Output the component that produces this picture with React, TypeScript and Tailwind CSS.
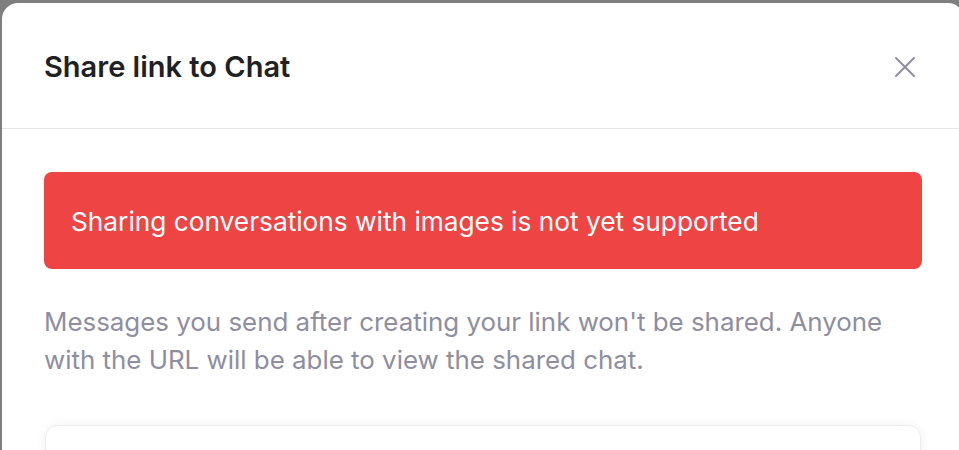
import React from "react";

export default function App() {
  return (
    <div
      className="w-[959px] h-[450px] overflow-hidden bg-[#7f7f7f] relative"
      style={{ fontFamily: "Inter, 'Noto Sans', sans-serif" }}
    >
      <div className="absolute left-[2px] top-[3px] w-[962px] h-[600px] bg-white rounded-[16px]">
        <div className="h-[126px] flex items-center justify-between pl-[42px] pr-[42px] border-b border-[#e5e5e5]">
          <h2 className="text-[29px] font-semibold text-[#202123] mt-[2px]">
            Share link to Chat
          </h2>
          <button className="w-[22px] h-[22px] flex items-center justify-center text-[#8e8ea0] mr-[6px] mt-[2px]">
            <svg width="22" height="22" viewBox="0 0 22 22" fill="none" stroke="currentColor" strokeWidth="2" strokeLinecap="round">
              <path d="M2 2L20 20M20 2L2 20" />
            </svg>
          </button>
        </div>
        <div className="px-[42px] pt-[43px]">
          <div className="w-[878px] h-[97px] rounded-[8px] bg-[#ef4444] flex items-center px-[27px]">
            <span className="text-white text-[26.25px] mt-[3px]">
              Sharing conversations with images is not yet supported
            </span>
          </div>
          <p className="mt-[34px] text-[25.9px] leading-[38px] text-[#8e8ea0] w-[878px]">
            Messages you send after creating your link won't be shared. Anyone with the URL will be able to view the shared chat.
          </p>
          <div className="mt-[46px] ml-[1px] w-[876px] h-[120px] rounded-[12px] border border-[#ececf1] shadow-[0_0_12px_rgba(0,0,0,0.06)]" />
        </div>
      </div>
    </div>
  );
}
